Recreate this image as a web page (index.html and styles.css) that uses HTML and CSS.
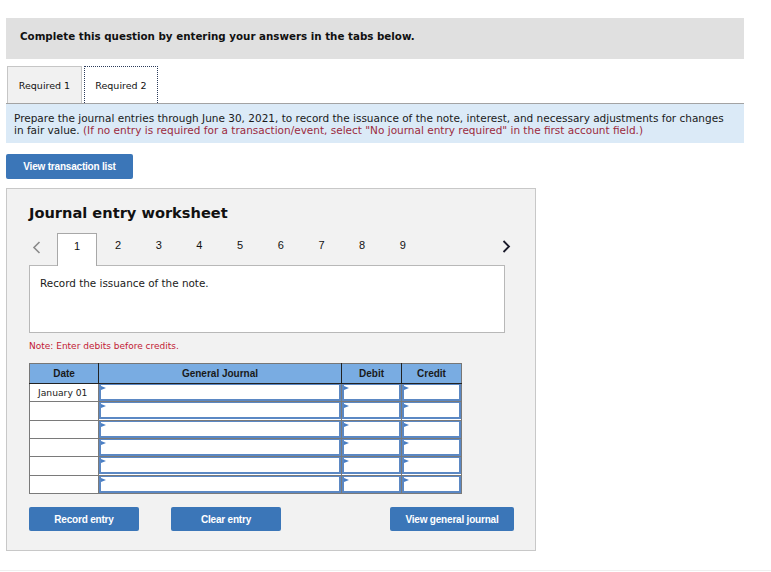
FILE: index.html
```html
<!DOCTYPE html>
<html>
<head>
<meta charset="utf-8">
<link rel="stylesheet" href="styles.css">
</head>
<body>
<div class="page">
  <div class="banner">Complete this question by entering your answers in the tabs below.</div>
  <div class="tabs">
    <div class="tab">Required 1</div>
    <div class="tab active">Required 2</div>
  </div>
  <div class="info">Prepare the journal entries through June 30, 2021, to record the issuance of the note, interest, and necessary adjustments for changes<br>in fair value. <span class="red">(If no entry is required for a transaction/event, select "No journal entry required" in the first account field.)</span></div>
  <button class="btn btn-list">View transaction list</button>

  <div class="worksheet">
    <h2 class="ws-title">Journal entry worksheet</h2>
    <div class="pager">
      <span class="nav prev"><svg width="9" height="13" viewBox="0 0 9 13"><path d="M7.5 1 L2 6.5 L7.5 12" fill="none" stroke="#8a8a8a" stroke-width="1.6"/></svg></span>
      <span class="pg current">1</span>
      <span class="pg">2</span>
      <span class="pg">3</span>
      <span class="pg">4</span>
      <span class="pg">5</span>
      <span class="pg">6</span>
      <span class="pg">7</span>
      <span class="pg">8</span>
      <span class="pg">9</span>
      <span class="nav next"><svg width="9" height="13" viewBox="0 0 9 13"><path d="M1.5 1 L7 6.5 L1.5 12" fill="none" stroke="#1a1a2a" stroke-width="1.8"/></svg></span>
    </div>
    <div class="desc">Record the issuance of the note.</div>
    <div class="note">Note: Enter debits before credits.</div>

    <table class="journal">
      <colgroup><col class="c-date"><col class="c-acct"><col class="c-amt"><col class="c-amt"></colgroup>
      <thead>
        <tr><th>Date</th><th>General Journal</th><th>Debit</th><th>Credit</th></tr>
      </thead>
      <tbody>
        <tr><td class="date">January 01</td><td class="in"><div class="box"></div></td><td class="in"><div class="box"></div></td><td class="in"><div class="box"></div></td></tr>
        <tr><td class="date"></td><td class="in"><div class="box"></div></td><td class="in"><div class="box"></div></td><td class="in"><div class="box"></div></td></tr>
        <tr><td class="date"></td><td class="in"><div class="box"></div></td><td class="in"><div class="box"></div></td><td class="in"><div class="box"></div></td></tr>
        <tr><td class="date"></td><td class="in"><div class="box"></div></td><td class="in"><div class="box"></div></td><td class="in"><div class="box"></div></td></tr>
        <tr><td class="date"></td><td class="in"><div class="box"></div></td><td class="in"><div class="box"></div></td><td class="in"><div class="box"></div></td></tr>
        <tr><td class="date"></td><td class="in"><div class="box"></div></td><td class="in"><div class="box"></div></td><td class="in"><div class="box"></div></td></tr>
      </tbody>
    </table>

    <div class="actions">
      <button class="btn btn-act">Record entry</button>
      <button class="btn btn-act btn-clear">Clear entry</button>
      <button class="btn btn-act btn-view">View general journal</button>
    </div>
  </div>
</div>
<div class="footer-line"></div>
</body>
</html>
```

FILE: styles.css
```css
html, body {
  margin: 0;
  padding: 0;
  background: #fff;
}
body {
  font-family: "DejaVu Sans", Verdana, sans-serif;
  color: #111;
}
.page {
  width: 738px;
  margin-left: 6px;
  padding-top: 18px;
}
.banner {
  height: 41px;
  box-sizing: border-box;
  background: #e0e0e0;
  padding: 11px 0 0 14px;
  font-size: 10.3px;
  line-height: 14px;
  font-weight: bold;
  color: #111;
}
.tabs {
  margin-top: 7px;
  display: flex;
  gap: 2px;
  padding-left: 1px;
  border-bottom: 1px solid #a3a3a3;
  height: 37px;
}
.tab {
  width: 75px;
  height: 37px;
  box-sizing: border-box;
  display: flex;
  align-items: center;
  justify-content: center;
  font-size: 9.5px;
  color: #111;
  background: #f1f1f1;
  border: 1px solid #c6c6c6;
  border-bottom: none;
}
.tab.active {
  width: 74px;
  background: #fff;
  border: 1px dotted #2a3a5a;
  border-bottom: none;
}
.info {
  background: #dbeaf7;
  height: 39px;
  box-sizing: border-box;
  padding: 8px 8px 0 8px;
  font-size: 10.5px;
  line-height: 12.3px;
  color: #1a1a1a;
  white-space: nowrap;
}
.info .red {
  color: #9c2a3e;
}
.btn {
  border: none;
  border-radius: 2px;
  background: #3b76b8;
  color: #fff;
  font-family: "Liberation Sans", Arial, sans-serif;
  font-weight: bold;
  font-size: 10px;
  letter-spacing: -0.2px;
  padding: 0;
  cursor: pointer;
}
.btn-list {
  display: block;
  margin-top: 11px;
  width: 127px;
  height: 25px;
}
.worksheet {
  margin-top: 9px;
  width: 530px;
  height: 363px;
  box-sizing: border-box;
  background: #f2f2f2;
  border: 1px solid #c8c8c8;
  padding: 14px 30px 0 22px;
}
.ws-title {
  margin: 0;
  font-size: 14.6px;
  line-height: 19px;
  font-weight: bold;
  color: #111;
}
.pager {
  margin-top: 11px;
  display: flex;
  align-items: stretch;
  height: 32px;
  width: 476px;
  position: relative;
  z-index: 1;
}
.nav {
  display: flex;
  align-items: center;
}
.prev {
  width: 28px;
  padding-left: 3px;
  box-sizing: border-box;
  padding-bottom: 4px;
}
.next {
  margin-left: auto;
  margin-right: -6px;
  padding-bottom: 6px;
}
.pg {
  width: 40.7px;
  display: flex;
  align-items: center;
  justify-content: center;
  font-family: "Liberation Sans", Arial, sans-serif;
  font-size: 11px;
  color: #111;
  padding-bottom: 9px;
  box-sizing: border-box;
}
.pg.current {
  width: 40px;
  margin-right: 0.7px;
  background: #fff;
  border: 1px solid #a8a8a8;
  border-bottom: none;
  height: 33px;
  padding-bottom: 8px;
}
.desc {
  width: 476px;
  height: 68px;
  box-sizing: border-box;
  background: #fff;
  border: 1px solid #b8b8b8;
  padding: 11px 10px;
  font-size: 10.4px;
  line-height: 13px;
  color: #1a1a1a;
}
.note {
  margin-top: 7px;
  font-size: 9px;
  line-height: 12px;
  color: #c21a35;
}
.journal {
  margin-top: 11px;
  border-collapse: collapse;
  table-layout: fixed;
  width: 432px;
}
.journal th {
  background: #79ace2;
  font-family: "Liberation Sans", Arial, sans-serif;
  font-size: 10px;
  font-weight: bold;
  color: #1a1a1a;
  height: 19px;
  padding: 0;
  border: 1px solid #222;
  border-top: 1px solid #777;
}
.journal th:first-child { border-left: 1px solid #777; }
.journal th:last-child { border-right: 1px solid #777; }
.c-date { width: 69px; }
.c-acct { width: 243px; }
.c-amt { width: 60px; }
.journal td {
  border: 1px solid #7a7a7a;
  padding: 0;
  height: 17.35px;
  background: #fff;
}
.journal td.date {
  font-size: 9.2px;
  color: #1a1a1a;
  padding-left: 8px;
  vertical-align: middle;
}
.journal td.in {
  vertical-align: top;
}
.box {
  position: relative;
  height: 17px;
  box-sizing: border-box;
  border: 2px solid #5b88c4;
  border-top-width: 1.5px;
  background: #fff;
}
.box::before {
  content: "";
  position: absolute;
  left: 0;
  top: 1px;
  border-left: 5px solid #4a7fc5;
  border-top: 2px solid transparent;
  border-bottom: 2px solid transparent;
}
.actions {
  margin-top: 13px;
  display: flex;
  width: 485px;
}
.btn-act {
  width: 110px;
  height: 24px;
}
.btn-clear {
  margin-left: 32px;
}
.btn-view {
  margin-left: auto;
  width: 124px;
}
.footer-line {
  margin-top: 19px;
  height: 1px;
  background: #efefef;
}
```
